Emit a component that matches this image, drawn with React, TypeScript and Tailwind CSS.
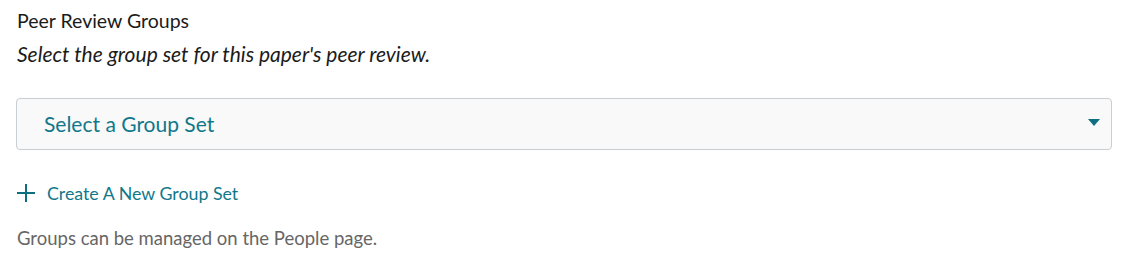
export default function App() {
  return (
    <div className="w-[1124px] h-[267px] bg-white px-4 pt-[9px] font-['Lato',sans-serif]">
      <div className="pl-px text-[19.5px] leading-[24px] text-[#1b1b1b]">Peer Review Groups</div>
      <div className="pl-px mt-[8px] text-[21px] leading-[26px] italic text-[#1b1b1b]">
        Select the group set for this paper's peer review.
      </div>
      <div className="mt-[31px] h-[52px] w-[1096px] rounded-[4px] border border-[#c9ced2] bg-[#f9f9f9] flex items-center justify-between pl-[27px] pr-[10px]">
        <span className="text-[21px] text-[#11788a]">Select a Group Set</span>
        <svg width="12" height="7" viewBox="0 0 12 7" className="mr-[1px] mb-[4px]">
          <path d="M0 0h12L6 7z" fill="#0d6f80" />
        </svg>
      </div>
      <div className="mt-[30px] flex items-center gap-[11px]">
        <svg width="20" height="20" viewBox="0 0 20 20">
          <path d="M10 1v18M1 10h18" stroke="#0d6f80" strokeWidth="2" />
        </svg>
        <span className="text-[17.8px] text-[#11788a]">Create A New Group Set</span>
      </div>
      <div className="pl-px mt-[18px] text-[18.5px] text-[#666666]">Groups can be managed on the People page.</div>
    </div>
  );
}
